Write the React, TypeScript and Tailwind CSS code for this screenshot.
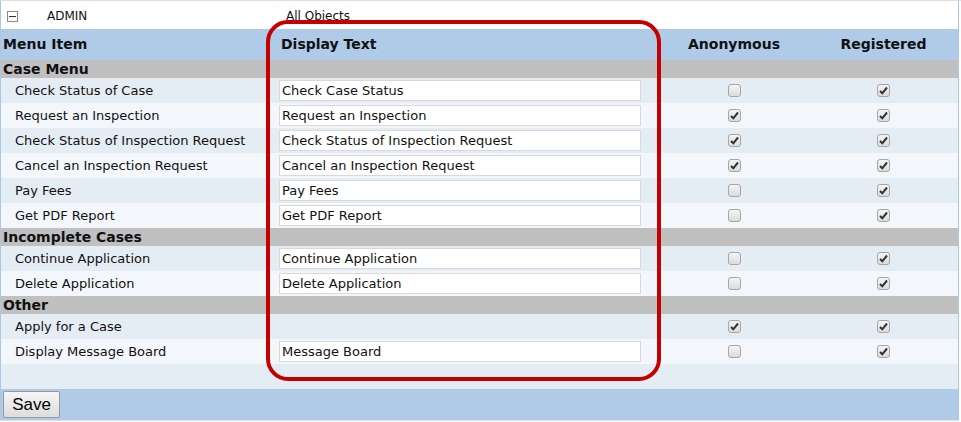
import React from "react";

type Row = { label: string; text?: string; anon: boolean; reg: boolean };
type Group = { name: string; rows: Row[] };

const groups: Group[] = [
  {
    name: "Case Menu",
    rows: [
      { label: "Check Status of Case", text: "Check Case Status", anon: false, reg: true },
      { label: "Request an Inspection", text: "Request an Inspection", anon: true, reg: true },
      { label: "Check Status of Inspection Request", text: "Check Status of Inspection Request", anon: true, reg: true },
      { label: "Cancel an Inspection Request", text: "Cancel an Inspection Request", anon: true, reg: true },
      { label: "Pay Fees", text: "Pay Fees", anon: false, reg: true },
      { label: "Get PDF Report", text: "Get PDF Report", anon: false, reg: true },
    ],
  },
  {
    name: "Incomplete Cases",
    rows: [
      { label: "Continue Application", text: "Continue Application", anon: false, reg: true },
      { label: "Delete Application", text: "Delete Application", anon: false, reg: true },
    ],
  },
  {
    name: "Other",
    rows: [
      { label: "Apply for a Case", anon: true, reg: true },
      { label: "Display Message Board", text: "Message Board", anon: false, reg: true },
    ],
  },
];

function Box({ checked }: { checked: boolean }) {
  return (
    <span className="flex h-[13px] w-[13px] items-center justify-center rounded-[3px] border border-[#a6a6a6] bg-gradient-to-b from-[#f4f4f4] to-[#dcdcdc]">
      {checked && (
        <svg width="9" height="9" viewBox="0 0 9 9">
          <path d="M1 5 L3.3 7.3 L8 1.5" fill="none" stroke="#333" strokeWidth="2" />
        </svg>
      )}
    </span>
  );
}

export default function App() {
  let idx = 0;
  return (
    <div
      className="relative w-[961px] h-[422px] bg-white text-[#111] border-t border-[#dedede]"
      style={{ fontFamily: "Verdana, 'DejaVu Sans', sans-serif" }}
    >
      <div className="w-[959px] border-l border-r border-[#a9c8e8]">
        {/* top row */}
        <div className="flex h-[28px] items-center pt-[2px] text-[12px]">
          <div className="flex w-[278px] items-center">
            <span className="ml-[6px] flex h-[11px] w-[11px] items-center justify-center border border-[#8a8a8a] bg-white">
              <span className="h-px w-[7px] bg-[#333]" />
            </span>
            <span className="ml-[29px]">ADMIN</span>
          </div>
          <span className="ml-[7px]">All Objects</span>
        </div>

        {/* header */}
        <div className="flex h-[31px] items-center bg-[#b0cbe8] text-[14px] font-bold">
          <div className="w-[278px] pl-[2px]">Menu Item</div>
          <div className="w-[380px] pl-[2px]">Display Text</div>
          <div className="w-[150px] text-center">Anonymous</div>
          <div className="w-[149px] text-center">Registered</div>
        </div>

        {groups.map((g) => (
          <div key={g.name}>
            <div className="flex h-[18px] items-center bg-[#c0c0c0] pl-[2px] text-[14px] font-bold leading-none">
              {g.name}
            </div>
            {g.rows.map((r) => {
              const even = idx++ % 2 === 0;
              return (
                <div
                  key={r.label}
                  className={`flex h-[25px] items-center text-[13px] ${even ? "bg-[#e4ecf4]" : "bg-[#f3f7fb]"}`}
                >
                  <div className="w-[278px] pl-[14px] pt-px">{r.label}</div>
                  <div className="w-[380px]">
                    {r.text && (
                      <div className="flex h-[21px] w-[362px] items-center border border-[#d9d9d9] bg-white pl-[2px]">
                        {r.text}
                      </div>
                    )}
                  </div>
                  <div className="flex w-[150px] justify-center">
                    <Box checked={r.anon} />
                  </div>
                  <div className="flex w-[149px] justify-center">
                    <Box checked={r.reg} />
                  </div>
                </div>
              );
            })}
          </div>
        ))}

        <div className="h-[25px] bg-[#e4ecf4]" />

        {/* footer */}
        <div className="flex h-[31px] items-center bg-[#b0cbe8] pl-[2px]">
          <button
            className="h-[27px] w-[57px] rounded-[2px] border border-[#9a9a9a] bg-gradient-to-b from-[#f6f6f6] to-[#dddddd] text-[17px] text-black"
            style={{ fontFamily: "Arial, 'Liberation Sans', sans-serif" }}
          >
            Save
          </button>
        </div>
      </div>
      <div className="h-px w-[959px] bg-[#dedede]" />

      {/* highlight */}
      <div className="pointer-events-none absolute left-[266px] top-[19px] h-[361px] w-[395px] rounded-[22px] border-[4px] border-[#c40000]" />
    </div>
  );
}
